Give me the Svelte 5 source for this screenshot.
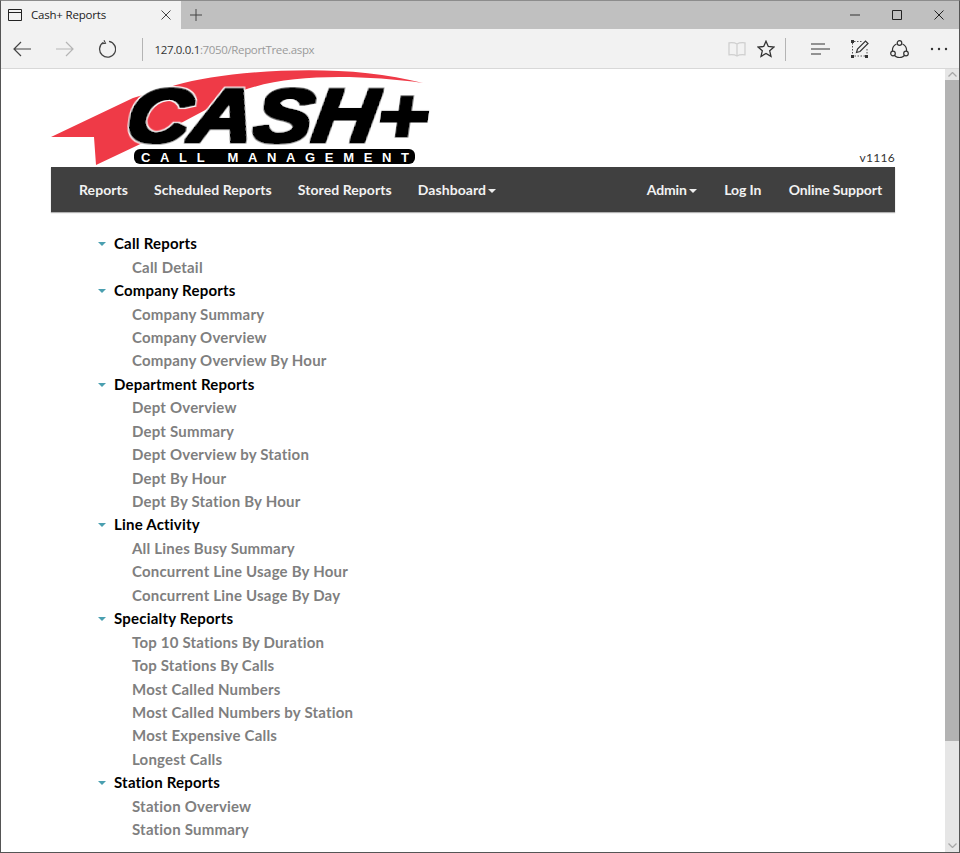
<script>
  const groups = [
    ['Call Reports', ['Call Detail']],
    ['Company Reports', ['Company Summary', 'Company Overview', 'Company Overview By Hour']],
    ['Department Reports', ['Dept Overview', 'Dept Summary', 'Dept Overview by Station', 'Dept By Hour', 'Dept By Station By Hour']],
    ['Line Activity', ['All Lines Busy Summary', 'Concurrent Line Usage By Hour', 'Concurrent Line Usage By Day']],
    ['Specialty Reports', ['Top 10 Stations By Duration', 'Top Stations By Calls', 'Most Called Numbers', 'Most Called Numbers by Station', 'Most Expensive Calls', 'Longest Calls']],
    ['Station Reports', ['Station Overview', 'Station Summary']]
  ];
  const leftNav = [['Reports', false], ['Scheduled Reports', false], ['Stored Reports', false], ['Dashboard', true]];
  const rightNav = [['Admin', true], ['Log In', false], ['Online Support', false]];
</script>

<div class="window">
  <div class="titlebar">
    <div class="tab">
      <svg class="tabicon" width="14" height="12" viewBox="0 0 14 12"><path d="M.5.5h13v11H.5zM.5 3.5h13" fill="none" stroke="#222"/></svg>
      <span class="tabtitle">Cash+ Reports</span>
      <svg class="tabclose" width="10" height="10" viewBox="0 0 10 10"><path d="M.5.5l9 9M9.500.5l-9 9" stroke="#444" fill="none"/></svg>
    </div>
    <svg class="newtab" width="12" height="12" viewBox="0 0 12 12"><path d="M6 0v12M0 6h12" stroke="#444" fill="none"/></svg>
    <div class="winbtns">
      <span class="winbtn"><svg width="10" height="10" viewBox="0 0 10 10"><path d="M0 5h10" stroke="#333" fill="none"/></svg></span>
      <span class="winbtn"><svg width="10" height="10" viewBox="0 0 10 10"><path d="M.5.5h9v9h-9z" stroke="#222" fill="none"/></svg></span>
      <span class="winbtn"><svg width="10" height="10" viewBox="0 0 10 10"><path d="M.5.5l9 9M9.500.5l-9 9" stroke="#222" fill="none"/></svg></span>
    </div>
  </div>

  <div class="toolbar">
    <span class="tb"><svg width="18" height="16" viewBox="0 0 18 16"><path d="M18 8H1M8 1L1 8l7 7" stroke="#444" fill="none" stroke-width="1.200"/></svg></span>
    <span class="tb"><svg width="18" height="16" viewBox="0 0 18 16"><path d="M0 8h17M10 1l7 7-7 7" stroke="#b5b5b5" fill="none" stroke-width="1.200"/></svg></span>
    <span class="tb"><svg width="18" height="18" viewBox="0 0 18 18"><path d="M5.500 2.300A8 8 0 1 0 11 1.300" stroke="#444" fill="none" stroke-width="1.300"/><path d="M5 .5l1.500 3-3.500.5" stroke="#444" fill="none" stroke-width="1.100" transform="translate(1 -.2)"/></svg></span>
    <span class="vsep first"></span>
    <span class="url"><b>127.0.0.1</b>:7050/ReportTree.aspx</span>
    <span class="tb narrow book"><svg width="18" height="15" viewBox="0 0 18 15"><path d="M9 2C7 .7 4 .5 1 .8v12c3-.3 6-.1 8 1.200 2-1.300 5-1.500 8-1.200V.8C14 .5 11 .7 9 2zM9 2v12" stroke="#cfcfcf" fill="none" stroke-width="1.300"/></svg></span>
    <span class="tb narrow"><svg width="18" height="18" viewBox="0 0 18 18"><path d="M9 1.200l2.300 5.300 5.700.5-4.300 3.800 1.300 5.600L9 13.500 4 16.400l1.300-5.600L1 7l5.700-.5z" stroke="#333" fill="none" stroke-width="1.300"/></svg></span>
    <span class="vsep second"></span>
    <span class="tb wide"><svg width="19" height="12" viewBox="0 0 19 12"><path d="M0 1h14M0 6h19M0 11h10" stroke="#333" fill="none" stroke-width="1.200"/></svg></span>
    <span class="tb wide"><svg width="18" height="18" viewBox="0 0 18 18"><path d="M1.500 3v13h13M3 1.500h8M16 9v6" stroke="#555" fill="none" stroke-dasharray="1.500 1.500"/><path d="M0 0h3v3H0zM0 15h3v3H0zM14 15h3v3h-3z" fill="#333"/><path d="M5.500 12.500l1-3.500L14.500 1l2.500 2.500-8 8z" stroke="#333" fill="none" stroke-width="1.200"/></svg></span>
    <span class="tb wide"><svg width="19" height="18" viewBox="0 0 19 18"><path d="M6.500 4A7 7 0 0 0 2.500 11M12.500 4a7 7 0 0 1 4 7M4.500 15.500a7 7 0 0 0 10 0" stroke="#333" fill="none" stroke-width="1.200"/><circle cx="9.500" cy="3" r="2.300" fill="none" stroke="#333" stroke-width="1.200"/><circle cx="3" cy="13.500" r="2.300" fill="none" stroke="#333" stroke-width="1.200"/><circle cx="16" cy="13.500" r="2.300" fill="none" stroke="#333" stroke-width="1.200"/></svg></span>
    <span class="tb wide"><svg width="18" height="4" viewBox="0 0 18 4"><circle cx="2" cy="2" r="1.200" fill="#333"/><circle cx="9" cy="2" r="1.200" fill="#333"/><circle cx="16" cy="2" r="1.200" fill="#333"/></svg></span>
  </div>

  <div class="viewport">
    <div class="page">
      <header class="brand">
        <svg class="logo" width="385" height="97" viewBox="50 70 385 97">
          <defs>
            <filter id="fat" x="-5%" y="-15%" width="110%" height="130%">
              <feMorphology in="SourceAlpha" operator="dilate" radius="2.200" result="b"/>
              <feMorphology in="SourceAlpha" operator="dilate" radius="3" result="w"/>
              <feFlood flood-color="#fff"/><feComposite in2="w" operator="in" result="wf"/>
              <feFlood flood-color="#000"/><feComposite in2="b" operator="in" result="bf"/>
              <feMerge><feMergeNode in="wf"/><feMergeNode in="bf"/></feMerge>
            </filter>
          </defs>
          <path d="M50 138L132 99 175 86C225 72 340 62 422 84 360 76 290 74 240 92L150 140 95 166 93 138Z" fill="#ef3a47"/>
          <g transform="translate(20 0) skewX(-8)">
            <text class="cash" x="123" y="143" textLength="301" lengthAdjust="spacingAndGlyphs" filter="url(#fat)">CASH+</text>
          </g>
          <rect x="133" y="150" width="281" height="15" rx="6" fill="#000"/>
          <text class="cm" x="140" y="162.500" textLength="268" lengthAdjust="spacing">CALL MANAGEMENT</text>
        </svg>
        <span class="ver">v1116</span>
      </header>

      <nav class="navbar">
        <ul class="left">
          {#each leftNav as [label, caret]}
            <li>{label}{#if caret}<i class="caret"></i>{/if}</li>
          {/each}
        </ul>
        <ul class="right">
          {#each rightNav as [label, caret]}
            <li>{label}{#if caret}<i class="caret"></i>{/if}</li>
          {/each}
        </ul>
      </nav>

      <div class="tree">
        {#each groups as [name, items]}
          <div class="head"><i class="arrow"></i>{name}</div>
          {#each items as item}
            <div class="leaf">{item}</div>
          {/each}
        {/each}
      </div>
    </div>
    <div class="scroll">
      <svg class="chev" width="9" height="5" viewBox="0 0 9 5"><path d="M.5 4.500l4-4 4 4" stroke="#a8a8a8" fill="none" stroke-width="1.300"/></svg>
      <div class="thumb"></div>
      <div class="rest"></div>
      <svg class="chev down" width="9" height="5" viewBox="0 0 9 5"><path d="M.5.5l4 4 4-4" stroke="#a8a8a8" fill="none" stroke-width="1.300"/></svg>
    </div>
  </div>
</div>

<style>
  :global(body) { margin: 0; background: #fff; }
  .window {
    box-sizing: border-box;
    width: 960px; height: 853px;
    display: flex; flex-direction: column;
    border: 1px solid #555; border-top-color: #8c8c8c;
    overflow: hidden;
    font-family: Lato, "Open Sans", sans-serif;
  }
  .titlebar { height: 28px; background: #c0c0c0; display: flex; align-items: center; flex: none; }
  .tab {
    width: 180px; height: 100%; background: #f2f2f2;
    display: flex; align-items: center; box-sizing: border-box; padding: 0 0 1px 7px;
  }
  .tabtitle { margin-left: 9px; font: 11.500px "Open Sans", sans-serif; letter-spacing: -.2px; color: #222; flex: 1; }
  .tabclose { margin-right: 10px; }
  .newtab { margin: 0 0 1px 9px; }
  .winbtns { margin-left: auto; display: flex; padding-bottom: 1px; }
  .winbtn { width: 42px; display: flex; justify-content: center; }
  .winbtn:last-child { margin-right: -1px; }
  .toolbar {
    height: 38px; padding-top: 1px; flex: none; background: #f2f2f2; border-bottom: 1px solid #d8d8d8;
    display: flex; align-items: center;
  }
  .tb { width: 42.500px; display: flex; justify-content: center; align-items: center; flex: none; }
  .tb.narrow { width: 28px; }
  .tb.book { margin-left: -2px; margin-right: 1px; }
  .tb.wide { width: 39.700px; }
  .vsep { width: 1px; height: 23px; background: #b4b4b4; flex: none; }
  .vsep.first { margin-left: 13px; }
  .vsep.second { margin: 0 14px 0 5px; }
  .url { margin-left: 12px; flex: 1; font: 11.500px "Open Sans", sans-serif; color: #9a9a9a; letter-spacing: -.35px; }
  .url b { font-weight: 400; color: #333; }
  .viewport { flex: 1; display: flex; min-height: 0; }
  .page { flex: 1; padding: 0 50px; overflow: hidden; }
  .brand { height: 98px; display: flex; justify-content: space-between; align-items: flex-end; }
  .logo { display: block; margin-bottom: 1px; }
  .cash { font: italic 700 75px "Liberation Sans", sans-serif; fill: #000; }
  .cm { font: 700 13px "Liberation Sans", sans-serif; fill: #fff; }
  .ver { font-size: 12px; color: #333; letter-spacing: .3px; line-height: 15px; margin-bottom: 2px; }
  .navbar {
    height: 45px; background: #404040; display: flex; justify-content: space-between; align-items: center;
    padding-left: 15px; box-shadow: 0 1px 1px rgba(0,0,0,.3);
  }
  .navbar ul { list-style: none; display: flex; margin: 0; padding: 0; }
  .navbar li { padding: 0 13px; color: #f2f2f2; font-size: 14px; font-weight: 700; white-space: nowrap; }
  .left li { letter-spacing: .07px; }
  .right li { letter-spacing: -.1px; padding: 0 13.700px; }
  .right li:last-child { padding-right: 13px; }
  .caret {
    display: inline-block; width: 0; height: 0; margin-left: 2px; vertical-align: middle;
    border: 4px solid transparent; border-top-color: #eee; border-bottom: 0;
  }
  .tree { padding: 20.200px 0 0 46px; }
  .head, .leaf { height: 23.440px; line-height: 23.440px; white-space: nowrap; font-size: 15px; font-weight: 700; letter-spacing: .2px; }
  .head { color: #000; position: relative; padding-left: 17px; }
  .leaf { color: #7f7f7f; padding-left: 35px; }
  .arrow {
    position: absolute; left: 1px; top: 10px; width: 0; height: 0;
    border: 4px solid transparent; border-top: 4px solid #4a9fb0; border-bottom: 0;
  }
  .scroll { width: 14px; flex: none; background: #e6e6e6; display: flex; flex-direction: column; align-items: center; }
  .chev { margin: 3px 0; flex: none; }
  .thumb { width: 100%; height: 661px; background: #b3b3b3; flex: none; }
  .rest { flex: 1; }
  .chev.down { margin: 0 0 4px; }
</style>
